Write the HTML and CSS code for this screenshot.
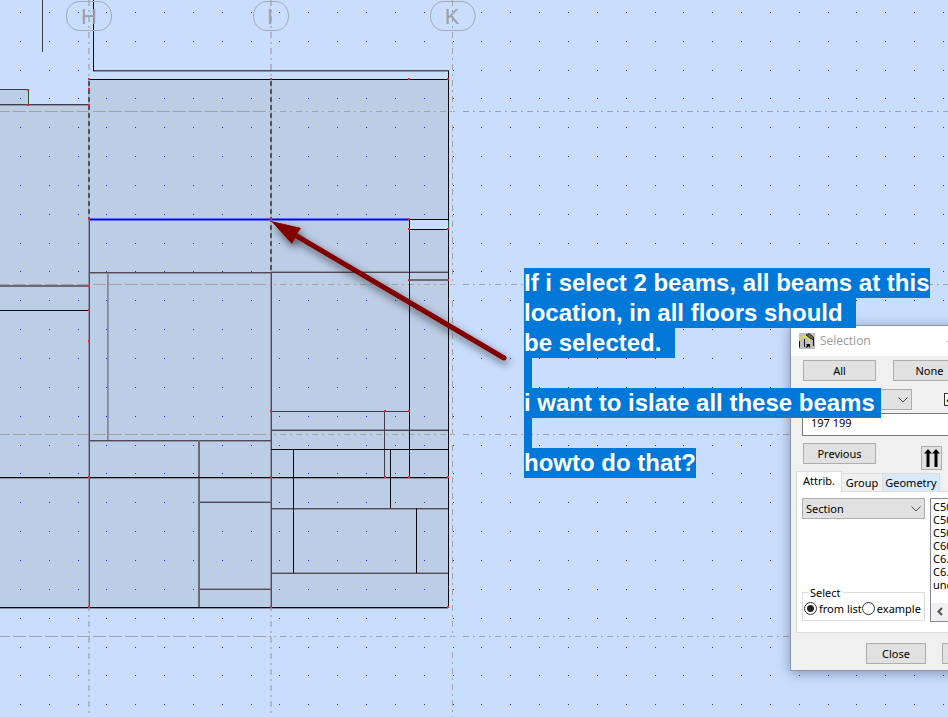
FILE: index.html
```html
<!DOCTYPE html>
<html lang="en">
<head>
<meta charset="utf-8">
<title>Structural plan</title>
<link rel="stylesheet" href="styles.css">
</head>
<body>
<main class="stage">
  <svg class="plan" aria-label="Floor plan" shape-rendering="crispEdges">
    <defs>
      <filter id="soft" x="-20%" y="-20%" width="140%" height="150%">
        <feDropShadow dx="2" dy="4" stdDeviation="4" flood-color="#000" flood-opacity=".6"/>
      </filter>
    </defs>
    <path class="slab" d="M0 105H89V79H448V219H409V229H448V607H0ZM0 90H28V105H0Z"/>

    <g class="axis">
      <g class="long">
        <path d="M-3 111.5H267M-3 284.5H267M-3 434.5H267M-3 636.5H267"/>
      </g>
      <g class="short">
        <path d="M280 111.5H452M280 284.5H452M280 434.5H452M280 636.5H452"/>
        <path d="M463 111.5H3000M463 284.5H3000M463 434.5H3000M463 636.5H3000"/>
        <path d="M452.5 0V111M452.5 125V284M452.5 301V434M452.5 445V636M452.5 652V3000"/>
      </g>
      <path d="M269 111.5h2M274 111.5h2M269 284.5h2M274 284.5h2M269 434.5h2M274 434.5h2M269 636.5h2M274 636.5h2M453 111.5h2M453 284.5h2M453 434.5h2M453 636.5h2"/>
      <path class="short wide" d="M89 0V79M271 0V79M89 621V3000M271 621V3000"/>
      <path class="wide" d="M89 609v2M89 615v2M271 609v2M271 615v2"/>
      <path class="wide" d="M89 79V219M271 79V272"/>
    </g>
    <path class="hidden-edge" d="M89 81V219M271 81V272"/>

    <path id="dots" class="dots"/>

    <g class="pair">
      <path class="light" d="M93 71.5H449M89 273.5H271M271 271.5H448M108.5 273V440M271 429.5H448M89 441.5H271M271 509.5H448M271 572.5H448M199.5 440V607M270.5 272V607M88.5 219V607M293.5 449V573M199 501.5H271M199 588.5H271M0 608.5H448M0 478.5H448M0 105.5H89"/>
      <path class="mid" d="M93 70.5H449M89 272.5H448M271 430.5H448M89 440.5H271M271 508.5H448M271 573.5H448M89.5 219V607M271.5 272V607M199 502.5H271M199 589.5H271"/>
      <path class="wall" d="M198.5 440V607M199.5 440V607M0 285.5H89M0 286.5H89M409 279.5H448M409 280.5H448"/>
      <path class="faint" d="M107.5 273V440"/>
    </g>
    <path class="grey-edge" d="M42.5 0V52M0 89.5H28M0 104.5H89M271 411.5H409M384.5 411V477"/>
    <path class="edge" d="M93.5 0V71M89 79.5H449M448.5 71V608M0 310.5H89M409 219.5H448M409 229.5H448M409.5 219V477M271 449.5H448M0 477.5H448M293.5 449V573M390.5 449V508M416.5 508V573M0 607.5H448"/>
    <path class="green" d="M28.5 90V104M448.5 221V228"/>
    <path class="beam-halo" d="M89 219.5H409"/>
    <path class="beam" d="M89 219.5H409"/>
    <path class="node" d="M88 79h2M88 89h2M88 105h2M27 90h2M27 105h2M270 79h2M408 79h2M447 79h2M88 219h2M270 219h2M408 219h2M408 229h2M447 229h2M408 280h2M447 280h2M88 286h2M88 310h2M88 341h2M270 411h2M384 411h2M408 411h2M88 477h2M270 477h2M384 477h2M408 477h2M447 477h2M88 607h2M270 607h2M447 607h2"/>

    <g class="bubble" shape-rendering="auto">
      <path d="M80 1.500H98C107 1.500 111.500 9 111.500 16S107 30.500 98 30.500H80C71 30.500 66.500 23 66.500 16S71 1.500 80 1.500Z"/>
      <path d="M267 1.500H275C284 1.500 288.500 9 288.500 16S284 30.500 275 30.500H267C258 30.500 253.500 23 253.500 16S258 1.500 267 1.500Z"/>
      <path d="M444 1.500H461C470 1.500 475 9 475 16S470 30.500 461 30.500H444C435 30.500 430.500 23 430.500 16S435 1.500 444 1.500Z"/>
      <text x="89" y="24">H</text>
      <text x="270" y="24">I</text>
      <text x="452" y="24">K</text>
    </g>

    <g filter="url(#soft)" shape-rendering="auto">
      <path class="shaft" d="M295 235L504 358"/>
      <path class="head" d="M271 221L301 228L297 234L292 244Z"/>
    </g>
  </svg>

  <section class="window" aria-label="Selection">
    <header class="title">
      <svg class="app-icon" viewBox="0 0 16 16" aria-hidden="true">
        <path fill="#c0c0c0" d="M0 0h16v16H0z"/>
        <path fill="#666" stroke="#111" stroke-width=".8" d="M7 2L10 .5L14.500 4V7L11 5Z"/>
        <path fill="none" stroke="#111" d="M.500 8V14.500M5.500 6V14M14.500 7V13"/>
        <path fill="none" stroke="#f4ec00" d="M1 7.500Q2 4 6 3Q10 4.500 11 11"/>
        <path fill="#111" d="M6.500 15.500L8 12L7 11H11V15L9.500 13.500Z"/>
      </svg>
      <h1>Selection</h1>
      <span class="minimize"></span>
    </header>
    <div class="row top">
      <button type="button">All</button>
      <button type="button">None</button>
    </div>
    <div class="row filter">
      <span class="combo"><select aria-label="Object type"></select>
        <svg class="chevron" viewBox="0 0 10 6" aria-hidden="true"><path d="M.5 .5L5 5L9.500 .5"/></svg></span>
      <input class="check" type="checkbox" checked aria-label="Filter">
    </div>
    <input class="numbers" type="text" value="197 199" aria-label="Selected objects">
    <div class="row history">
      <button type="button">Previous</button>
      <button class="raise" type="button" aria-label="Move up">
        <svg viewBox="0 0 16 18" aria-hidden="true"><path d="M4 0L8 4.500H5.500V18H2.500V4.500H0ZM12 0L16 4.500H13.500V18H10.500V4.500H8Z"/></svg>
      </button>
    </div>
    <div class="tabs" role="tablist">
      <button class="tab active" type="button" role="tab" aria-selected="true">Attrib.</button>
      <button class="tab" type="button" role="tab">Group</button>
      <button class="tab hover" type="button" role="tab">Geometry</button>
    </div>
    <div class="panel">
      <div class="left">
        <span class="combo"><select aria-label="Attribute"><option>Section</option></select>
          <svg class="chevron" viewBox="0 0 10 6" aria-hidden="true"><path d="M.5 .5L5 5L9.500 .5"/></svg></span>
        <fieldset>
          <legend>Select</legend>
          <label><input type="radio" name="mode" checked>from list</label>
          <label><input type="radio" name="mode">example</label>
        </fieldset>
      </div>
      <div class="list">
        <ul>
          <li>C50</li><li>C50</li><li>C50</li><li>C60</li><li>C6.</li><li>C6.</li><li>und</li>
        </ul>
        <div class="scroll">
          <svg viewBox="0 0 6 8" aria-hidden="true"><path d="M5 .5L1.500 4L5 7.500"/></svg>
        </div>
      </div>
    </div>
    <footer class="row actions">
      <button type="button">Close</button>
      <button type="button" aria-label="Help"></button>
    </footer>
  </section>

  <p class="note"><span>If i select 2 beams, all beams at this</span><span>location, in all floors should  </span><span>be selected.  </span><span> </span><span>i want to islate all these beams </span><span> </span><span>howto do that?</span></p>
</main>
<script src="grid.js"></script>
</body>
</html>
```
FILE: grid.js
```js
// Snap grid: one dot per step, rounded to whole pixels so every dot stays sharp.
const STEP = 28.85;
const ORIGIN = { x: 20.3, y: 12.3 };
const dots = document.getElementById("dots");

function drawGrid() {
  let d = "";
  for (let y = ORIGIN.y; y < window.innerHeight; y += STEP) {
    for (let x = ORIGIN.x; x < window.innerWidth; x += STEP) {
      d += `M${Math.floor(x)} ${Math.floor(y)}h1v1h-1z`;
    }
  }
  dots.setAttribute("d", d);
}

window.addEventListener("resize", drawGrid);
drawGrid();
```
FILE: styles.css
```css
* { box-sizing: border-box; }

body { margin: 0; }

.stage {
  position: relative;
  height: 100vh;
  overflow: hidden;
  background: #c9deff;
  font: 11px/13px "Noto Sans", "Open Sans", sans-serif;
  color: #000;
}

/* Drawing */
.plan { display: block; width: 100%; height: 100%; }
.plan path { fill: none; }
.plan .slab { fill: #bccde6; }
.axis { stroke: #a3a3a3; }
.long { stroke-dasharray: 13 3; }
.short { stroke-dasharray: 6 4 2 4; }
.wide { stroke: #b0b7c4; stroke-width: 2; }
.hidden-edge { stroke: #505666; stroke-width: 2; stroke-dasharray: 5 3; }
.plan .dots { fill: #2424ff; }
.light { stroke: #9096a8; }
.mid { stroke: #51495a; }
.wall { stroke: #6a6a78; }
.faint { stroke: #858aa4; }
.grey-edge { stroke: #3b3f49; }
.edge { stroke: #0c080e; }
.green { stroke: #1c5a35; }
.beam-halo { stroke: #5a68f2; stroke-width: 3; }
.beam { stroke: #0000f0; }
.node { stroke: #f02028; stroke-width: 2; }
.bubble { stroke: #a3a8b2; }
.bubble text {
  fill: #9c9fa6;
  stroke: none;
  font: 22px "Liberation Sans", sans-serif;
  text-anchor: middle;
}
.shaft { stroke: #800000; stroke-width: 5; stroke-linecap: round; }
.plan .head { fill: #800000; }

/* Note */
.note {
  position: absolute;
  left: 524px;
  top: 268px;
  margin: 0;
  display: flex;
  flex-direction: column;
  align-items: flex-start;
  font: bold 24px/30px "Liberation Sans", Arial, sans-serif;
  font-kerning: none;
  font-variant-ligatures: none;
  color: #fff;
  white-space: pre;
}
.note span { min-width: 8px; height: 30px; background: #0078d7; }

/* Selection window */
.window {
  position: absolute;
  left: 790px;
  top: 325px;
  width: 240px;
  border: 1px solid #8995a8;
  background: #f0f0f0;
  box-shadow: 0 2px 12px rgba(0, 0, 30, .35);
}
.title {
  display: flex;
  align-items: center;
  gap: 5px;
  height: 30px;
  padding-left: 8px;
  background: #fff;
}
.app-icon { width: 16px; height: 16px; }
.title h1 {
  margin: 0;
  width: 122px;
  font: 12px/16px "Open Sans", sans-serif;
  color: #9a9a9a;
}
.minimize { width: 10px; height: 1px; background: #999; }

.row { display: flex; padding-left: 12px; }
.window button {
  width: 73px;
  height: 21px;
  padding: 0;
  border: 1px solid #adadad;
  background: #e1e1e1;
  font: inherit;
  color: #000;
}
.top { gap: 17px; margin-top: 4px; }
.filter { margin: 8px 0 3px; gap: 32px; padding-left: 11px; align-items: flex-start; }
.combo { position: relative; display: block; }
.combo select {
  display: block;
  appearance: none;
  width: 100%;
  height: 21px;
  padding: 0 3px;
  border: 1px solid #adadad;
  border-radius: 0;
  background: #e1e1e1;
  font: inherit;
  color: #000;
}
.filter .combo { width: 110px; }
.chevron {
  position: absolute;
  right: 4px;
  top: 8px;
  width: 10px;
  height: 6px;
}
.chevron path, .scroll path { fill: none; stroke: #505050; }
.check { width: 13px; height: 13px; margin: 4px 0 0; appearance: none; border: 1px solid #333; background: #fff; }
.check:checked::before { content: "✓"; display: block; font: 11px/11px "DejaVu Sans", sans-serif; }
.numbers {
  display: block;
  width: 180px;
  height: 23px;
  margin-left: 11px;
  padding: 0 8px 4px;
  border: 1px solid #7a7a7a;
  background: #fff;
  font: inherit;
}
.history { margin-top: 7px; gap: 45px; height: 28px; }
.window .raise { width: 21px; height: 24px; margin-top: 3px; display: grid; place-items: center; }
.raise svg { width: 16px; height: 18px; }

.tabs { display: flex; align-items: flex-end; padding-left: 5px; }
.window .tab {
  width: 41px;
  height: 18px;
  border-color: #dcdcdc;
  border-width: 1px 1px 0 0;
  background: #f0f0f0;
}
.window .tab.active {
  position: relative;
  width: 46px;
  height: 21px;
  margin-bottom: -1px;
  padding-bottom: 3px;
  border-left-width: 1px;
  background: #fff;
}
.window .tab.hover { width: 57px; background: #d8eafa; }
.panel {
  display: flex;
  gap: 5px;
  height: 142px;
  margin-left: 5px;
  padding: 6px 5px;
  border: 1px solid #dcdcdc;
  background: #fff;
}
.left { width: 123px; display: flex; flex-direction: column; justify-content: space-between; }
fieldset {
  display: flex;
  width: 123px;
  min-width: 0;
  margin: 0 0 5px;
  padding: 3px 1px 5px;
  border: 1px solid #dcdcdc;
}
legend { margin-left: 4px; padding: 0 2px; }
label { display: flex; align-items: center; gap: 2px; white-space: nowrap; }
label input {
  appearance: none;
  width: 13px;
  height: 13px;
  margin: 0;
  border: 1px solid #333;
  border-radius: 50%;
  background: #fff;
}
label input:checked { background: radial-gradient(circle, #222 3px, #fff 4px); }
.list {
  flex: 1;
  display: flex;
  flex-direction: column;
  justify-content: space-between;
  height: 124px;
  border: 1px solid #828790;
}
.list ul { margin: 0; padding: 1px 2px; list-style: none; }
.scroll { height: 18px; padding: 4px 6px; background: #f0f0f0; }
.scroll svg { display: block; width: 6px; height: 9px; }
.scroll path { stroke-width: 2; }
.actions { gap: 16px; padding: 10px 0 6px 75px; }
.window .actions button { width: 60px; }
```
